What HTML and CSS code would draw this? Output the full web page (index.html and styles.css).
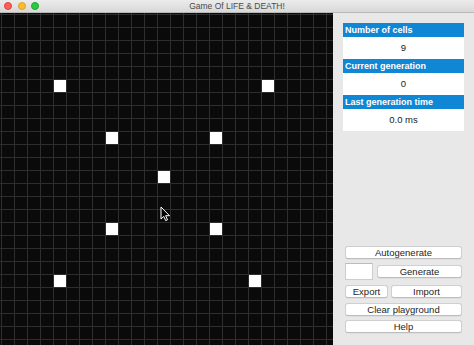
FILE: index.html
```html
<!DOCTYPE html>
<html>
<head>
<meta charset="utf-8">
<title>Game Of LIFE &amp; DEATH!</title>
<link rel="stylesheet" href="styles.css">
</head>
<body>
<div class="window">
  <div class="titlebar">
    <div class="lights">
      <span class="light red"></span>
      <span class="light yellow"></span>
      <span class="light green"></span>
    </div>
    <div class="title">Game Of LIFE &amp; DEATH!</div>
  </div>
  <div class="main">
    <div class="board">
      <div class="cell" style="grid-area: 6 / 5"></div>
      <div class="cell" style="grid-area: 6 / 21"></div>
      <div class="cell" style="grid-area: 10 / 9"></div>
      <div class="cell" style="grid-area: 10 / 17"></div>
      <div class="cell" style="grid-area: 13 / 13"></div>
      <div class="cell" style="grid-area: 17 / 9"></div>
      <div class="cell" style="grid-area: 17 / 17"></div>
      <div class="cell" style="grid-area: 21 / 5"></div>
      <div class="cell" style="grid-area: 21 / 20"></div>
      <svg class="cursor" width="11" height="16" viewBox="0 0 11 16">
        <path d="M1 1 L1 13 L3.8 10.4 L5.7 14.6 L7.5 13.8 L5.7 9.7 L9.5 9.7 Z" fill="#000" stroke="#fff" stroke-width="1" stroke-linejoin="round"/>
      </svg>
    </div>
    <div class="panel">
      <div class="stats">
        <div class="stat-head">Number of cells</div>
        <div class="stat-value">9</div>
        <div class="stat-head">Current generation</div>
        <div class="stat-value">0</div>
        <div class="stat-head">Last generation time</div>
        <div class="stat-value">0.0 ms</div>
      </div>
      <div class="controls">
        <div class="row r1"><button class="btn full">Autogenerate</button></div>
        <div class="row r2"><input class="field" type="text"><button class="btn grow">Generate</button></div>
        <div class="row r3"><button class="btn export">Export</button><button class="btn grow">Import</button></div>
        <div class="row r4"><button class="btn full">Clear playground</button></div>
        <div class="row r5"><button class="btn full">Help</button></div>
      </div>
    </div>
  </div>
</div>
</body>
</html>
```

FILE: styles.css
```css
html, body {
  margin: 0;
  padding: 0;
  background: #e8e8e8;
}

.window {
  width: 474px;
  height: 345px;
  display: flex;
  flex-direction: column;
  overflow: hidden;
  font-family: "Liberation Sans", Arial, sans-serif;
}

.titlebar {
  height: 13px;
  flex: none;
  position: relative;
  display: flex;
  align-items: center;
  justify-content: center;
  background: linear-gradient(#ececec, #d8d8d8);
  box-sizing: border-box;
  border-bottom: 1px solid #b9b9b9;
}

.lights {
  position: absolute;
  left: 4px;
  top: 2px;
  display: flex;
  gap: 5.5px;
}

.light {
  width: 8px;
  height: 8px;
  border-radius: 50%;
  box-sizing: border-box;
}

.red { background: #fc5f57; border: 0.5px solid #e0443e; }
.yellow { background: #fdbc2e; border: 0.5px solid #dea123; }
.green { background: #29c941; border: 0.5px solid #1aab29; }

.title {
  font-size: 8.5px;
  color: #4b4b4b;
  line-height: 12px;
}

.main {
  flex: 1;
  display: flex;
  min-height: 0;
}

.board {
  width: 333px;
  flex: none;
  position: relative;
  background-color: #0a0a0a;
  background-image:
    linear-gradient(to right, #2e2e2e 1px, transparent 1px),
    linear-gradient(to bottom, #2e2e2e 1px, transparent 1px);
  background-size: 13px 13px;
  background-position: 1px 1px;
  box-sizing: border-box;
  padding: 2px 0 0 2px;
  display: grid;
  grid-template-columns: repeat(26, 12px);
  grid-template-rows: repeat(26, 12px);
  column-gap: 1px;
  row-gap: 1px;
  align-content: start;
}

.cell {
  background: #ffffff;
}

.cursor {
  position: absolute;
  left: 160px;
  top: 193px;
}

.panel {
  flex: 1;
  display: flex;
  flex-direction: column;
  padding: 10px 10px 12px 10px;
  background: #e8e8e8;
}

.stats {
  background: #ffffff;
  display: flex;
  flex-direction: column;
}

.stat-head {
  height: 14px;
  line-height: 14px;
  background: #0f87d5;
  color: #ffffff;
  font-weight: bold;
  font-size: 9px;
  padding-left: 2px;
}

.stat-value {
  height: 22px;
  line-height: 22px;
  text-align: center;
  font-size: 9.5px;
  color: #1a1a1a;
}

.controls {
  margin-top: auto;
  display: flex;
  flex-direction: column;
  gap: 4px;
  padding: 0 2px;
}

.row {
  display: flex;
  align-items: center;
  gap: 4px;
}

.r1, .r5 { height: 13px; }
.r2 { height: 17px; }
.r3, .r4 { height: 14px; }
.r3 { gap: 3px; }

.btn {
  height: 13px;
  margin: 0;
  padding: 0;
  box-sizing: border-box;
  background: #ffffff;
  border: 1px solid #cfcfcf;
  border-bottom-color: #bdbdbd;
  border-radius: 3px;
  box-shadow: 0 0.5px 0.5px rgba(0, 0, 0, 0.08);
  font-family: "Liberation Sans", Arial, sans-serif;
  font-size: 9.5px;
  color: #242424;
  line-height: 11px;
}

.full { flex: 1; }
.grow { flex: 1; }
.export { width: 43px; flex: none; }

.field {
  width: 28px;
  height: 17px;
  flex: none;
  margin: 0;
  padding: 0;
  box-sizing: border-box;
  background: #ffffff;
  border: 1px solid #cdcdcd;
  border-top-color: #bcbcbc;
  outline: none;
}
```
